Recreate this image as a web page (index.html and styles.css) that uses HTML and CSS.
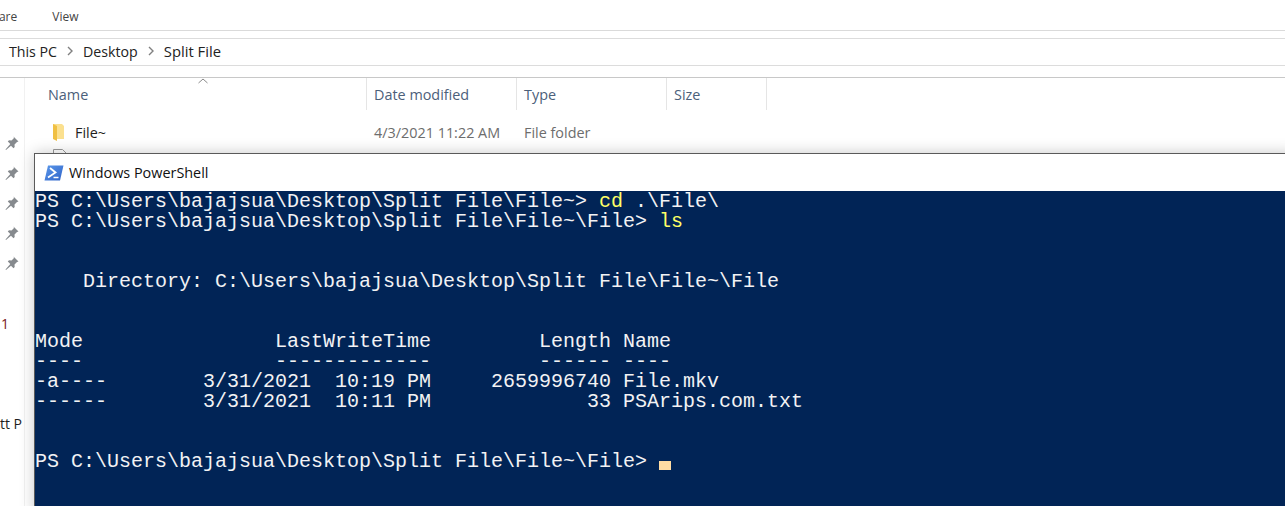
FILE: index.html
```html
<!DOCTYPE html>
<html lang="en">
<head>
<meta charset="utf-8">
<title>Split File - Windows PowerShell</title>
<link rel="stylesheet" href="styles.css">
</head>
<body>
<div class="explorer">
  <div class="ribbon">
    <span class="tab tab-share">Share</span>
    <span class="tab">View</span>
  </div>
  <div class="address">
    <span class="crumb">This PC</span>
    <svg class="chev" width="6" height="10" viewBox="0 0 6 10"><path d="M1 1l4 4-4 4" fill="none" stroke="#808080" stroke-width="1.4"/></svg>
    <span class="crumb">Desktop</span>
    <svg class="chev" width="6" height="10" viewBox="0 0 6 10"><path d="M1 1l4 4-4 4" fill="none" stroke="#808080" stroke-width="1.4"/></svg>
    <span class="crumb crumb-last">Split File</span>
  </div>
  <div class="main">
    <aside class="nav">
      <div class="pins">
        <svg class="pin" viewBox="0 0 14 14"><path d="M8.500.5l5 5-1.500.5-2.500 2.500.2 2.500-1.200 1.200-2.500-2.500L1 14l-.5-.5 4.800-5.500-2.500-2.500 1.200-1.200 2.500.2L9 2z" fill="#868a8e"/></svg>
        <svg class="pin" viewBox="0 0 14 14"><path d="M8.500.5l5 5-1.500.5-2.500 2.500.2 2.500-1.200 1.200-2.500-2.500L1 14l-.5-.5 4.800-5.500-2.500-2.500 1.200-1.200 2.500.2L9 2z" fill="#868a8e"/></svg>
        <svg class="pin" viewBox="0 0 14 14"><path d="M8.500.5l5 5-1.500.5-2.500 2.500.2 2.500-1.200 1.200-2.500-2.500L1 14l-.5-.5 4.800-5.500-2.500-2.500 1.200-1.200 2.500.2L9 2z" fill="#868a8e"/></svg>
        <svg class="pin" viewBox="0 0 14 14"><path d="M8.500.5l5 5-1.500.5-2.500 2.500.2 2.500-1.200 1.200-2.500-2.500L1 14l-.5-.5 4.800-5.500-2.500-2.500 1.200-1.200 2.500.2L9 2z" fill="#868a8e"/></svg>
        <svg class="pin" viewBox="0 0 14 14"><path d="M8.500.5l5 5-1.500.5-2.500 2.500.2 2.500-1.200 1.200-2.500-2.500L1 14l-.5-.5 4.800-5.500-2.500-2.500 1.200-1.200 2.500.2L9 2z" fill="#868a8e"/></svg>
      </div>
      <div class="nav-one">1</div>
      <div class="nav-tt">tt P</div>
    </aside>
    <section class="files">
      <div class="sort-arrow"><svg width="10" height="6" viewBox="0 0 10 6"><path d="M.5 5L5 1l4.500 4" fill="none" stroke="#8a8a8a"/></svg></div>
      <div class="head">
        <div class="col col-name">Name</div>
        <div class="col col-date">Date modified</div>
        <div class="col col-type">Type</div>
        <div class="col col-size">Size</div>
      </div>
      <div class="row">
        <div class="cell-name">
          <svg class="folder" width="14" height="18" viewBox="0 0 14 18"><path d="M1 1h9l2 2v13H1z" fill="#fbe08f"/><path d="M1 1l4 2v15l-4-2z" fill="#f0c043"/></svg>
          <span class="fname">File~</span>
        </div>
        <div class="cell-date">4/3/2021 11:22 AM</div>
        <div class="cell-type">File folder</div>
      </div>
      <svg class="doc" width="14" height="18" viewBox="0 0 14 18"><path d="M.5.500h9l4 4v13H.5z" fill="#fff" stroke="#9a9a9a"/></svg>
    </section>
  </div>
</div>

<div class="ps-window">
  <div class="ps-title">
    <svg class="ps-icon" width="20" height="16" viewBox="0 0 20 16">
      <defs><linearGradient id="psg" x1="0" y1="0" x2="1" y2="1"><stop offset="0" stop-color="#5b98ea"/><stop offset="1" stop-color="#2f63c8"/></linearGradient></defs>
      <path d="M4 .5h15.500l-3.500 15H.5z" fill="url(#psg)"/>
      <path d="M6 3l5.500 4.500L4 12.500" fill="none" stroke="#fff" stroke-width="1.800"/>
      <path d="M9.500 12.500h5" stroke="#fff" stroke-width="1.500"/>
    </svg>
    <span class="ps-name">Windows PowerShell</span>
  </div>
<pre class="console">PS C:\Users\bajajsua\Desktop\Split File\File~&gt; <span class="cmd">cd</span> .\File\
PS C:\Users\bajajsua\Desktop\Split File\File~\File&gt; <span class="cmd">ls</span>


    Directory: C:\Users\bajajsua\Desktop\Split File\File~\File


Mode                LastWriteTime         Length Name
----                -------------         ------ ----
-a----        3/31/2021  10:19 PM     2659996740 File.mkv
------        3/31/2021  10:11 PM             33 PSArips.com.txt


PS C:\Users\bajajsua\Desktop\Split File\File~\File&gt; <span class="cursor"></span></pre>
</div>
</body>
</html>
```

FILE: styles.css
```css
* { box-sizing: border-box; }
html, body { margin: 0; height: 100%; }
body {
  width: 1285px;
  height: 506px;
  overflow: hidden;
  position: relative;
  background: #fff;
  font-family: "Open Sans", "Noto Sans", sans-serif;
  font-size: 14.4px;
  color: #1e1e1e;
}
.explorer { display: flex; flex-direction: column; height: 506px; }
.ribbon {
  height: 31px;
  flex: none;
  display: flex;
  gap: 35px;
  align-items: center;
  padding-top: 3px;
  border-bottom: 1px solid #dadada;
  font-size: 12px;
  color: #444;
}
.tab-share { margin-left: -15px; }
.address {
  margin-top: 7px;
  height: 28px;
  flex: none;
  display: flex;
  align-items: center;
  gap: 10px;
  padding: 0 0 2px 9px;
  border-top: 1px solid #dcdcdc;
  border-bottom: 1px solid #dcdcdc;
  font-size: 14.200px;
}
.crumb { color: #222; }
.crumb-last { font-size: 14.800px; }
.main {
  margin-top: 11px;
  flex: 1;
  display: flex;
  border-top: 1px solid #c8c8c8;
}
.nav { width: 25px; flex: none; position: relative; border-right: 1px solid #f1f1f1; }
.pins { display: flex; flex-direction: column; gap: 16px; padding: 58px 0 0 5px; }
.pin { width: 14px; height: 14px; display: block; }
.nav-one { position: absolute; left: 1px; top: 236px; color: #7a2020; font-size: 14px; }
.nav-tt { position: absolute; left: 0; top: 336px; font-size: 14px; white-space: nowrap; }
.files { flex: 1; position: relative; }
.sort-arrow { position: absolute; left: 173px; top: 0; line-height: 0; }
.head { display: flex; height: 32px; color: #4c607a; font-size: 14.400px; }
.col {
  height: 32px;
  display: flex;
  align-items: center;
  border-right: 1px solid #e5e5e5;
}
.col-name { width: 342px; padding-left: 23px; }
.col-date { width: 150px; padding-left: 7px; }
.col-type { width: 150px; padding-left: 7px; }
.col-size { width: 100px; padding-left: 7px; }
.row { display: flex; height: 22px; margin-top: 11px; align-items: center; color: #6d6d6d; }
.cell-name { width: 342px; padding-left: 27px; display: flex; align-items: center; gap: 9px; color: #1e1e1e; }
.folder { display: block; }
.doc { display: block; margin: 6px 0 0 28px; }
.cell-date { width: 150px; padding-left: 7px; }
.cell-type { padding-left: 7px; }

.ps-window {
  position: absolute;
  left: 34px;
  top: 153px;
  width: 1260px;
  height: 360px;
  border: 1px solid #5a5a5a;
  border-right: 0;
  background: #fff;
  box-shadow: 0 0 14px rgba(0, 0, 0, 0.22);
  display: flex;
  flex-direction: column;
}
.ps-title {
  height: 37px;
  flex: none;
  display: flex;
  align-items: center;
  gap: 5px;
  padding-left: 9px;
  font-size: 14.400px;
  color: #111;
}
.ps-icon { display: block; }
.console {
  flex: 1;
  margin: 0;
  background: #012456;
  color: #f2f2f4;
  font-family: "Liberation Mono", monospace;
  font-size: 20px;
  line-height: 20px;
  padding-top: 1px;
  white-space: pre;
}
.cmd { color: #ffff66; }
.cursor {
  display: inline-block;
  width: 12px;
  height: 9px;
  background: #ffdca3;
  vertical-align: -3px;
}
```
